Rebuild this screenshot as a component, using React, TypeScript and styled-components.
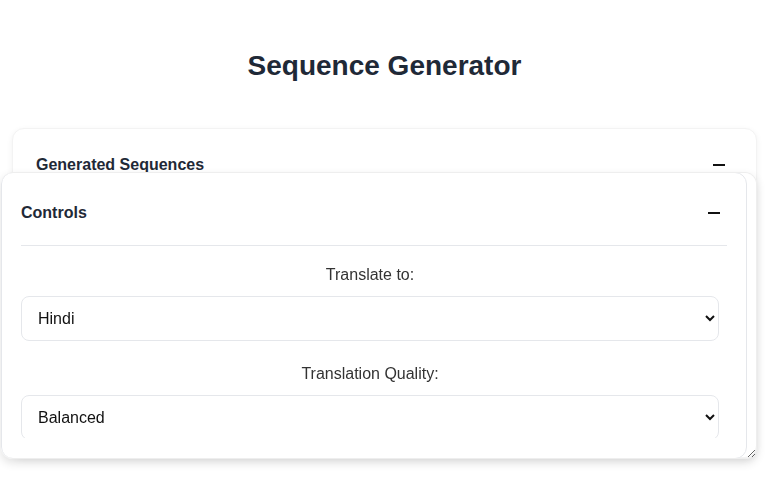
import React from "react";
import styled, { createGlobalStyle } from "styled-components";

const Global = createGlobalStyle`
  html, body { margin: 0; padding: 0; background: #ffffff; }
  body { font-family: "Liberation Sans", Arial, sans-serif; color: #1f2937; }
  * { box-sizing: border-box; }
`;

const Page = styled.div`
  padding: 50px 11px 0 12px;
  height: 480px;
  overflow: hidden;
`;

const Title = styled.h1`
  margin: 0;
  font-size: 28px;
  line-height: 32px;
  font-weight: 700;
  text-align: center;
  color: #1f2937;
`;

const Card = styled.section`
  margin-top: 46px;
  height: 330px;
  background: #ffffff;
  border: 1px solid #f3f3f3;
  border-radius: 12px;
  box-shadow: 0 2px 6px rgba(0, 0, 0, 0.06);
`;

const CardHeader = styled.div<{ $pad: string }>`
  display: flex;
  align-items: center;
  justify-content: space-between;
  padding: ${(p) => p.$pad};
`;

const CardTitle = styled.h2`
  margin: 0;
  font-size: 16px;
  line-height: 20px;
  font-weight: 700;
  color: #1f2937;
`;

const ToggleButton = styled.button`
  width: 24px;
  height: 20px;
  padding: 0;
  border: none;
  background: transparent;
  display: flex;
  align-items: center;
  justify-content: center;
  cursor: pointer;
`;

const Minus = styled.span`
  display: block;
  width: 12px;
  height: 2px;
  background: #111111;
`;

const PanelFrame = styled.div`
  position: fixed;
  left: 1px;
  top: 172px;
  width: 756px;
  height: 287px;
  border: 1px solid #eeeeee;
  border-left: none;
  border-radius: 12px;
  resize: both;
  overflow: hidden;
  box-shadow: 0 4px 10px rgba(0, 0, 0, 0.12);
  background: transparent;
`;

const Panel = styled.div`
  width: 746px;
  height: 287px;
  margin-top: -1px;
  background: #ffffff;
  border: 1px solid #e5e7eb;
  border-radius: 12px;
  padding: 21px 19px 20px;
  display: flex;
  flex-direction: column;
`;

const PanelHeader = styled.div`
  display: flex;
  align-items: center;
  justify-content: space-between;
  height: 37px;
  margin-bottom: 14px;
`;

const Divider = styled.div`
  height: 1px;
  background: #e5e7eb;
  flex-shrink: 0;
`;

const PanelBody = styled.div`
  flex: 1;
  min-height: 0;
  overflow: hidden;
  padding-right: 8px;
`;

const Field = styled.div<{ $top: number }>`
  display: flex;
  flex-direction: column;
  gap: 11px;
  margin-top: ${(p) => p.$top}px;
`;

const Label = styled.label`
  display: block;
  text-align: center;
  font-size: 16px;
  line-height: 20px;
  color: #333333;
`;

const Select = styled.select`
  width: 100%;
  height: 45px;
  padding: 0 12px 0 12px;
  font-family: "Liberation Sans", Arial, sans-serif;
  font-size: 16px;
  color: #111111;
  background: #ffffff;
  border: 1px solid #e5e7eb;
  border-radius: 8px;
`;

export default function App() {
  return (
    <>
      <Global />
      <Page>
        <Title>Sequence Generator</Title>
        <Card>
          <CardHeader $pad="26px 25px 0 23px">
            <CardTitle>Generated Sequences</CardTitle>
            <ToggleButton aria-label="Collapse">
              <Minus />
            </ToggleButton>
          </CardHeader>
        </Card>
      </Page>
      <PanelFrame>
        <Panel>
          <PanelHeader>
            <CardTitle>Controls</CardTitle>
            <ToggleButton aria-label="Collapse" style={{ marginRight: 1 }}>
              <Minus />
            </ToggleButton>
          </PanelHeader>
          <Divider />
          <PanelBody>
            <Field $top={19}>
              <Label htmlFor="lang">Translate to:</Label>
              <Select id="lang" defaultValue="Hindi">
                <option>Hindi</option>
                <option>Spanish</option>
                <option>French</option>
              </Select>
            </Field>
            <Field $top={23}>
              <Label htmlFor="quality">Translation Quality:</Label>
              <Select id="quality" defaultValue="Balanced">
                <option>Fast</option>
                <option>Balanced</option>
                <option>Accurate</option>
              </Select>
            </Field>
          </PanelBody>
        </Panel>
      </PanelFrame>
    </>
  );
}
